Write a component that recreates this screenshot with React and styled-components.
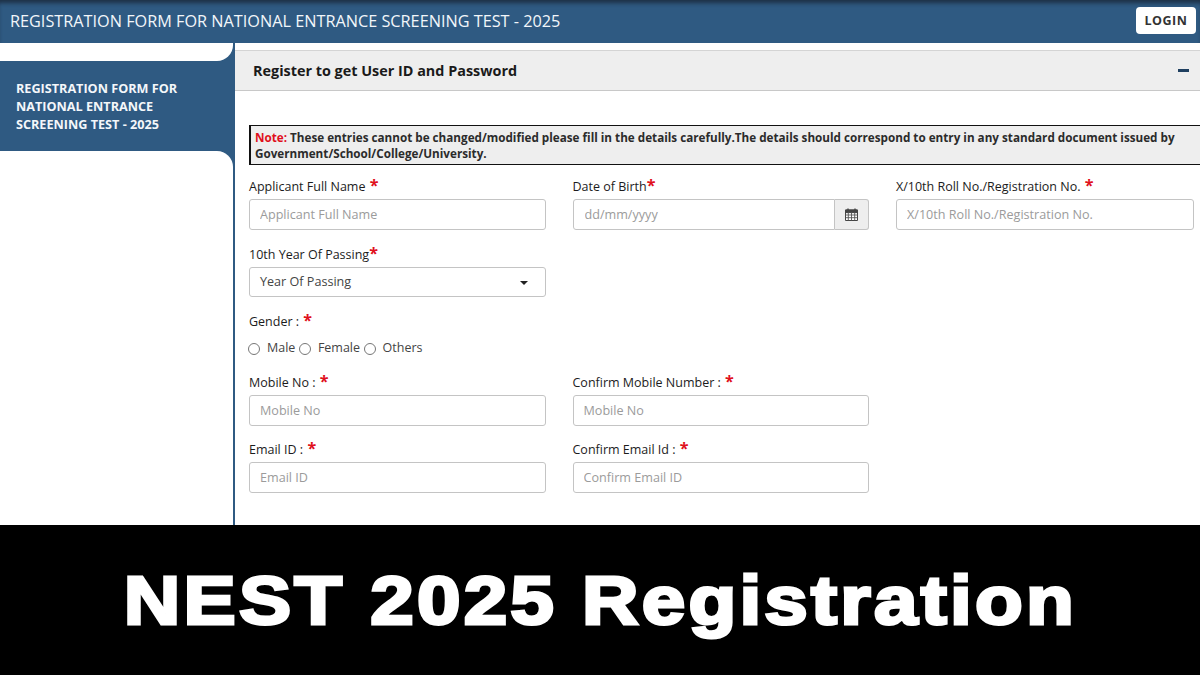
import React from "react";
import styled, { createGlobalStyle } from "styled-components";

const GlobalStyle = createGlobalStyle`
  html, body {
    margin: 0;
    padding: 0;
    background: #ffffff;
    font-family: "Open Sans", "Liberation Sans", sans-serif;
  }
  * {
    box-sizing: border-box;
  }
`;

function CalendarIcon() {
  return (
    <svg width="13" height="13" viewBox="0 0 13 13" fill="none">
      <path d="M0.5 2h12v10.5h-12z" fill="#ffffff" stroke="#444" />
      <path d="M0.5 2h12v2.6h-12z" fill="#444" stroke="#444" />
      <path d="M3 0.5v2.5M10 0.5v2.5" stroke="#444" strokeWidth="1.4" />
      <path d="M3.3 4.5v8M6.5 4.5v8M9.7 4.5v8M0.5 7h12M0.5 9.7h12" stroke="#555" strokeWidth="0.9" />
    </svg>
  );
}

function Field({ label, placeholder, tight }) {
  return (
    <FieldBox>
      <Label>
        {label}
        <Star $tight={tight}>*</Star>
      </Label>
      <TextInput placeholder={placeholder} />
    </FieldBox>
  );
}

function App() {
  return (
    <>
      <GlobalStyle />
      <Page>
        <Portal>
          <Header>
            <HeaderTitle>REGISTRATION FORM FOR NATIONAL ENTRANCE SCREENING TEST - 2025</HeaderTitle>
            <LoginButton>LOGIN</LoginButton>
          </Header>
          <Body>
            <Sidebar>
              <SideTop />
              <SideItem>
                REGISTRATION FORM FOR
                <br />
                NATIONAL ENTRANCE
                <br />
                SCREENING TEST - 2025
              </SideItem>
              <SideBottom />
            </Sidebar>
            <Main>
              <PanelHead>
                <PanelTitle>Register to get User ID and Password</PanelTitle>
                <Collapse />
              </PanelHead>
              <Form>
                <Note>
                  <NoteTag>Note:</NoteTag> These entries cannot be changed/modified please fill in the details
                  carefully.The details should correspond to entry in any standard document issued by
                  <br />
                  Government/School/College/University.
                </Note>
                <Grid $rowGap={15}>
                  <Field label="Applicant Full Name " placeholder="Applicant Full Name" />
                  <FieldBox>
                    <Label>
                      Date of Birth<Star $tight>*</Star>
                    </Label>
                    <DateGroup>
                      <DateInput placeholder="dd/mm/yyyy" />
                      <DateAddon>
                        <CalendarIcon />
                      </DateAddon>
                    </DateGroup>
                  </FieldBox>
                  <Field label="X/10th Roll No./Registration No. " placeholder="X/10th Roll No./Registration No." />
                  <FieldBox>
                    <Label>
                      10th Year Of Passing<Star $tight>*</Star>
                    </Label>
                    <SelectBox>
                      Year Of Passing
                      <Caret />
                    </SelectBox>
                  </FieldBox>
                </Grid>
                <GenderBlock>
                  <Label>
                    Gender : <Star>*</Star>
                  </Label>
                  <RadioRow>
                    <RadioLabel>
                      <Radio name="gender" />
                      Male
                    </RadioLabel>
                    <RadioLabel>
                      <Radio name="gender" />
                      Female
                    </RadioLabel>
                    <RadioLabel>
                      <Radio name="gender" />
                      Others
                    </RadioLabel>
                  </RadioRow>
                </GenderBlock>
                <Grid $rowGap={14}>
                  <Field label="Mobile No : " placeholder="Mobile No" />
                  <Field label="Confirm Mobile Number : " placeholder="Mobile No" />
                  <span />
                  <Field label="Email ID : " placeholder="Email ID" />
                  <Field label="Confirm Email Id : " placeholder="Confirm Email ID" />
                </Grid>
              </Form>
            </Main>
          </Body>
        </Portal>
        <Banner>
          <BannerText>NEST 2025 Registration</BannerText>
        </Banner>
      </Page>
    </>
  );
}

const Page = styled.div`
  width: 1200px;
  height: 675px;
  display: flex;
  flex-direction: column;
  overflow: hidden;
`;
const Portal = styled.div`
  height: 525px;
  display: flex;
  flex-direction: column;
`;
const Header = styled.header`
  height: 43px;
  flex-shrink: 0;
  display: flex;
  align-items: center;
  justify-content: space-between;
  padding: 0 4px 2px 10px;
  background: #2f5a82;
  box-shadow: inset 0 5px 4px -2px rgba(20, 25, 35, 0.65);
`;
const HeaderTitle = styled.div`
  color: #f2f6fa;
  font-size: 16.25px;
  line-height: 22px;
`;
const LoginButton = styled.button`
  width: 60px;
  height: 27px;
  padding: 0;
  border: 0;
  border-radius: 4px;
  background: #ffffff;
  color: #333333;
  font-family: inherit;
  font-size: 12.5px;
  font-weight: 700;
  letter-spacing: 0.5px;
`;
const Body = styled.div`
  flex: 1;
  display: flex;
  min-height: 0;
`;
const Sidebar = styled.aside`
  width: 235px;
  flex-shrink: 0;
  display: flex;
  flex-direction: column;
  background: #2f5a82;
`;
const SideTop = styled.div`
  height: 18px;
  margin-right: 2px;
  background: #ffffff;
  border-bottom-right-radius: 16px;
`;
const SideItem = styled.div`
  height: 90px;
  padding: 18px 0 0 16px;
  color: #f4f7fa;
  font-size: 12.65px;
  font-weight: 700;
  line-height: 18px;
`;
const SideBottom = styled.div`
  flex: 1;
  margin-right: 2px;
  background: #ffffff;
  border-top-right-radius: 16px;
`;
const Main = styled.main`
  flex: 1;
  min-width: 0;
  overflow: hidden;
  padding-top: 7px;
  background: #ffffff;
`;
const PanelHead = styled.div`
  height: 41px;
  display: flex;
  align-items: center;
  justify-content: space-between;
  padding: 0 11px 1px 18px;
  background: #eeeeee;
  border-top: 1px solid #d4d4d4;
  border-bottom: 1px solid #c8c8c8;
`;
const PanelTitle = styled.h2`
  margin: 0;
  color: #1a1a1a;
  font-size: 14.4px;
  font-weight: 700;
`;
const Collapse = styled.span`
  width: 11px;
  height: 3px;
  background: #1f3f60;
`;
const Form = styled.div`
  padding: 34px 0 0 14px;
`;
const Note = styled.div`
  width: 970px;
  height: 40px;
  padding: 3px 0 0 4px;
  background: #eeeeee;
  border: 1px solid #111111;
  border-left-width: 2px;
  color: #2b2b2b;
  font-size: 11.7px;
  font-weight: 700;
  line-height: 16px;
  white-space: nowrap;
`;
const NoteTag = styled.span`
  color: #e0101c;
`;
const Grid = styled.div`
  display: grid;
  grid-template-columns: 296.5px 296.5px 297.5px;
  column-gap: 27px;
  row-gap: ${(p) => p.$rowGap}px;
`;
const FieldBox = styled.div`
  display: flex;
  flex-direction: column;
  padding-top: 12px;
  &:nth-child(n + 4) {
    padding-top: 0;
  }
`;
const Label = styled.label`
  height: 22px;
  color: #1c1c1c;
  font-size: 12.5px;
  line-height: 20px;
  white-space: pre;
`;
const Star = styled.span`
  color: #e0101c;
  font-size: 16px;
  font-weight: 700;
  line-height: 14px;
  margin-left: ${(p) => (p.$tight ? "0" : "1px")};
`;
const TextInput = styled.input`
  width: 100%;
  height: 31px;
  padding: 0 10px;
  background: #ffffff;
  border: 1px solid #c4c4c4;
  border-radius: 3px;
  color: #333333;
  font-family: inherit;
  font-size: 12.6px;
  &::placeholder {
    color: #9b9b9b;
    opacity: 1;
  }
`;
const DateGroup = styled.div`
  display: flex;
  height: 31px;
`;
const DateInput = styled(TextInput)`
  flex: 1;
  width: auto;
  min-width: 0;
  padding-left: 11px;
  border-radius: 3px 0 0 3px;
`;
const DateAddon = styled.span`
  width: 34px;
  display: flex;
  align-items: center;
  justify-content: center;
  background: #eeeeee;
  border: 1px solid #c4c4c4;
  border-left: 0;
  border-radius: 0 3px 3px 0;
`;
const SelectBox = styled.div`
  height: 30px;
  position: relative;
  padding-left: 10px;
  background: #ffffff;
  border: 1px solid #c4c4c4;
  border-radius: 3px;
  color: #444444;
  font-size: 12.6px;
  line-height: 28px;
`;
const Caret = styled.span`
  position: absolute;
  top: 13px;
  right: 17px;
  border-left: 4px solid transparent;
  border-right: 4px solid transparent;
  border-top: 4px solid #222222;
`;
const GenderBlock = styled.div`
  padding-top: 12px;
  height: 64px;
`;
const RadioRow = styled.div`
  display: flex;
  gap: 3.5px;
  margin-left: -1px;
  padding-top: 7px;
`;
const RadioLabel = styled.label`
  display: flex;
  align-items: center;
  gap: 7px;
  color: #444444;
  font-size: 12.5px;
  line-height: 18px;
`;
const Radio = styled.input.attrs({ type: "radio" })`
  width: 12px;
  height: 12px;
  margin: 2px 0 0;
`;
const Banner = styled.div`
  height: 150px;
  display: flex;
  align-items: center;
  justify-content: center;
  background: #000000;
  color: #ffffff;
  font-family: "Liberation Sans", Arial, sans-serif;
  font-size: 68px;
  font-weight: 700;
  letter-spacing: 2.8px;
  -webkit-text-stroke: 3px #ffffff;
  white-space: nowrap;
`;
const BannerText = styled.span`
  display: inline-block;
  transform: scaleX(1.15);
`;

export default App;
